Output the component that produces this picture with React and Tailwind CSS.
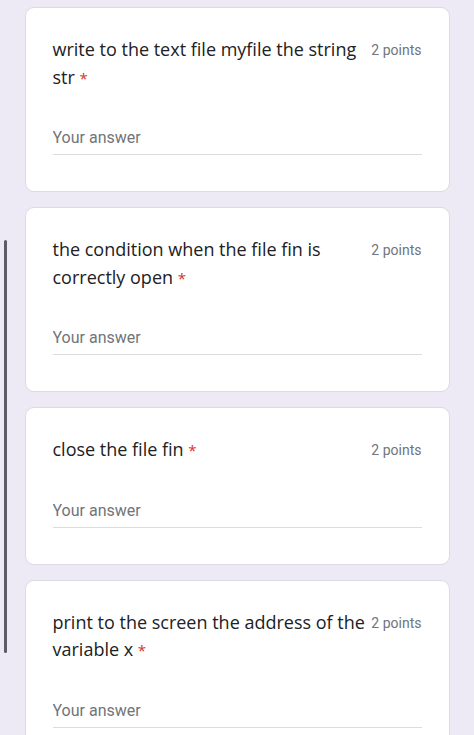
import React from "react";

const questions = [
  { id: 1, title: "write to the text file myfile the string str" },
  { id: 2, title: "the condition when the file fin is correctly open" },
  { id: 3, title: "close the file fin" },
  { id: 4, title: "print to the screen the address of the variable x" },
];

const QuestionCard = ({ title }) => {
  return (
    <div className="w-[425px] rounded-[9px] border border-[#dcdae4] bg-white px-[27px] pt-[28px] pb-[36px]">
      <div className="flex items-start justify-between">
        <h2 className="w-[320px] text-[18px] leading-[27.5px] text-[#202124] font-['Open_Sans',sans-serif]">
          {title}
          {"\u00a0"}
          <span className="text-[15px] leading-[15px] text-[#d93025]">*</span>
        </h2>
        <span className="pt-[5px] text-[14px] leading-[18px] whitespace-nowrap text-[#70757a] font-['Roboto',sans-serif]">
          2 points
        </span>
      </div>
      <div className="mt-[34px] border-b border-[#dadce0] pb-[4px]">
        <input
          className="w-full text-[16px] leading-[24px] text-[#202124] placeholder:text-[#70757a] outline-none font-['Roboto',sans-serif]"
          placeholder="Your answer"
        />
      </div>
    </div>
  );
};

export default function App() {
  return (
    <div className="relative min-h-[735px] bg-[#edeaf6] overflow-hidden">
      <div className="absolute left-[4px] top-[240px] h-[413px] w-[3px] rounded-full bg-[#5d5c64]" />
      <div className="flex flex-col items-center gap-[15px] pt-[7px] pb-[20px]">
        {questions.map((q) => (
          <QuestionCard key={q.id} title={q.title} />
        ))}
      </div>
    </div>
  );
}
